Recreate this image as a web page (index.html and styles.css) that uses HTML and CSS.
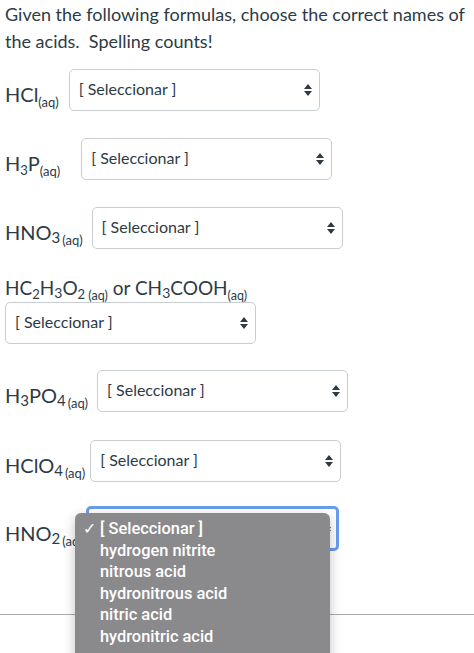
FILE: index.html
```html
<!DOCTYPE html>
<html lang="en">
<head>
  <meta charset="UTF-8" />
  <title>Quiz question</title>
  <link rel="stylesheet" href="styles.css">
</head>
<body>
  <div class="question">
    <p class="prompt">Given the following formulas, choose the correct names of the acids.&nbsp; Spelling counts!</p>

    <div class="row row-1">
      <span class="formula">HCl<sub class="aq">(aq)</sub></span>
      <div class="select">
        <span>[ Seleccionar ]</span>
        <svg class="arrows" width="8" height="12" viewBox="0 0 8 12"><path d="M4 0 L8 5 L0 5 Z M4 12 L8 7 L0 7 Z" fill="#2d3b45"/></svg>
      </div>
    </div>

    <div class="row row-2">
      <span class="formula">H<sub>3</sub>P<sub class="aq">(aq)</sub></span>
      <div class="select">
        <span>[ Seleccionar ]</span>
        <svg class="arrows" width="8" height="12" viewBox="0 0 8 12"><path d="M4 0 L8 5 L0 5 Z M4 12 L8 7 L0 7 Z" fill="#2d3b45"/></svg>
      </div>
    </div>

    <div class="row row-3">
      <span class="formula">HNO<sub class="big">3</sub><sub class="aq sp">(aq)</sub></span>
      <div class="select">
        <span>[ Seleccionar ]</span>
        <svg class="arrows" width="8" height="12" viewBox="0 0 8 12"><path d="M4 0 L8 5 L0 5 Z M4 12 L8 7 L0 7 Z" fill="#2d3b45"/></svg>
      </div>
    </div>

    <div class="block">
      <div class="formula">HC<sub>2</sub>H<sub class="big">3</sub>O<sub>2</sub><sub class="aq"> (aq)</sub> or CH<sub class="big">3</sub>COOH<sub class="aq">(aq)</sub></div>
      <div class="select">
        <span>[ Seleccionar ]</span>
        <svg class="arrows" width="8" height="12" viewBox="0 0 8 12"><path d="M4 0 L8 5 L0 5 Z M4 12 L8 7 L0 7 Z" fill="#2d3b45"/></svg>
      </div>
    </div>

    <div class="row row-5">
      <span class="formula">H<sub class="big">3</sub>PO<sub class="big">4</sub><sub class="aq sp">(aq)</sub></span>
      <div class="select">
        <span>[ Seleccionar ]</span>
        <svg class="arrows" width="8" height="12" viewBox="0 0 8 12"><path d="M4 0 L8 5 L0 5 Z M4 12 L8 7 L0 7 Z" fill="#2d3b45"/></svg>
      </div>
    </div>

    <div class="row row-6">
      <span class="formula">HClO<sub class="big">4</sub><sub class="aq sp">(aq)</sub></span>
      <div class="select">
        <span>[ Seleccionar ]</span>
        <svg class="arrows" width="8" height="12" viewBox="0 0 8 12"><path d="M4 0 L8 5 L0 5 Z M4 12 L8 7 L0 7 Z" fill="#2d3b45"/></svg>
      </div>
    </div>

    <div class="row row-7">
      <span class="formula">HNO<sub class="big">2</sub><sub class="aq sp">(aq)</sub></span>
      <div class="select focused">
        <span>[ Seleccionar ]</span>
        <svg class="arrows" width="8" height="12" viewBox="0 0 8 12"><path d="M4 0 L8 5 L0 5 Z M4 12 L8 7 L0 7 Z" fill="#2d3b45"/></svg>
      </div>
      <ul class="menu">
        <li class="checked">[ Seleccionar ]</li>
        <li>hydrogen nitrite</li>
        <li>nitrous acid</li>
        <li>hydronitrous acid</li>
        <li>nitric acid</li>
        <li>hydronitric acid</li>
      </ul>
    </div>
  </div>
  <div class="divider"></div>
</body>
</html>
```

FILE: styles.css
```css
html, body {
  height: 653px;
  overflow: hidden;
}

body {
  margin: 0;
  padding: 0 5px;
  font-family: Lato, 'Noto Sans', sans-serif;
  color: #2d3b45;
  background: #fff;
}

.prompt {
  margin: 0 -5px 0 0;
  padding-top: 1px;
  font-size: 18px;
  line-height: 27px;
}

.row {
  display: flex;
  align-items: center;
  gap: 10px;
  position: relative;
}

.row-1 { margin-top: 14px; }
.row-2 { margin-top: 27px; }
.row-2 .select { margin-left: 11px; }
.row-3 { margin-top: 27px; }
.row-3 .select { margin-left: -1px; }
.row-5 { margin-top: 26px; }
.row-5 .select { margin-left: -1px; }
.row-6 { margin-top: 28px; }
.row-6 .select { margin-left: -5px; }
.row-7 { margin-top: 24px; }
.row-7 .select { margin-left: -7px; }

.formula {
  font-size: 20px;
  padding-top: 8px;
  white-space: nowrap;
}

.formula sub {
  font-size: 13px;
  vertical-align: -4px;
  line-height: 0;
}

.formula sub.big {
  font-size: 15px;
  vertical-align: -3px;
}

.formula sub.aq {
  font-size: 13px;
  vertical-align: -5px;
}

.formula sub.sp {
  margin-left: 2px;
}

.block {
  margin-top: 26px;
}

.block .formula {
  font-size: 19px;
  padding-top: 0;
  line-height: 26px;
  margin-bottom: 1px;
}

.block .formula sub.big {
  font-size: 14px;
}

.block .formula sub.aq {
  font-size: 12.5px;
}

.select {
  width: 251px;
  height: 42px;
  box-sizing: border-box;
  border: 1px solid #c7cdd1;
  border-radius: 5px;
  display: flex;
  align-items: center;
  justify-content: space-between;
  padding: 0 7px 0 9px;
  font-size: 16px;
  flex-shrink: 0;
}

.select span {
  margin-top: -4px;
}

.select.focused {
  border: 3px solid #6a9bef;
  height: 45px;
  width: 253px;
  padding-left: 7px;
  padding-right: 5px;
}

.arrows {
  display: block;
}

.menu {
  position: absolute;
  left: 70px;
  top: 7px;
  width: 255px;
  height: 150px;
  margin: 0;
  padding: 5px 0 0;
  list-style: none;
  background: #8a8a8c;
  border-radius: 6px;
  box-shadow: 0 4px 12px rgba(0, 0, 0, 0.25);
  font-family: Roboto, 'Liberation Sans', sans-serif;
  font-weight: 500;
  font-size: 16.4px;
  line-height: 21.6px;
  color: #fff;
  z-index: 2;
}

.menu li {
  padding-left: 25px;
  position: relative;
}

.menu li.checked::before {
  content: "\2713";
  position: absolute;
  left: 8px;
}

.divider {
  border-top: 1px solid #aaa;
  margin: 63px -5px 0;
}
```
